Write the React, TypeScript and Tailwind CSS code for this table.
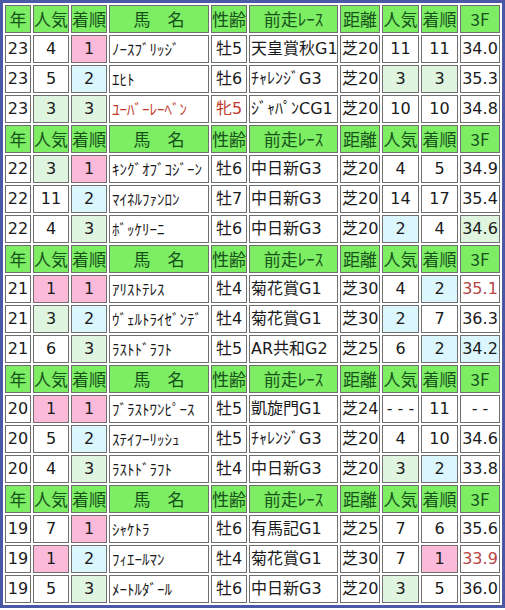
import React from "react";

type Tone = "pink" | "blue" | "green" | undefined;

type Row = {
  year: string;
  pop: [string, Tone];
  rank: [string, Tone];
  name: string;
  sex: string;
  red?: boolean;
  race: string;
  dist: string;
  prevPop: [string, Tone];
  prevRank: [string, Tone];
  last3f: [string, Tone];
  redF?: boolean;
};

const TONE: Record<string, string> = {
  pink: "bg-[#fbbad9]",
  blue: "bg-[#dcf6fd]",
  green: "bg-[#dff5df]",
};

const GROUPS: Row[][] = [
  [
    { year: "23", pop: ["4", undefined], rank: ["1", "pink"], name: "ﾉｰｽﾌﾞﾘｯｼﾞ", sex: "牡5", race: "天皇賞秋G1", dist: "芝20", prevPop: ["11", undefined], prevRank: ["11", undefined], last3f: ["34.0", undefined] },
    { year: "23", pop: ["5", undefined], rank: ["2", "blue"], name: "ｴﾋﾄ", sex: "牡6", race: "ﾁｬﾚﾝｼﾞG3", dist: "芝20", prevPop: ["3", "green"], prevRank: ["3", "green"], last3f: ["35.3", undefined] },
    { year: "23", pop: ["3", "green"], rank: ["3", "green"], name: "ﾕｰﾊﾞｰﾚｰﾍﾞﾝ", sex: "牝5", red: true, race: "ｼﾞｬﾊﾟﾝCG1", dist: "芝20", prevPop: ["10", undefined], prevRank: ["10", undefined], last3f: ["34.8", undefined] },
  ],
  [
    { year: "22", pop: ["3", "green"], rank: ["1", "pink"], name: "ｷﾝｸﾞｵﾌﾞｺｼﾞｰﾝ", sex: "牡6", race: "中日新G3", dist: "芝20", prevPop: ["4", undefined], prevRank: ["5", undefined], last3f: ["34.9", undefined] },
    { year: "22", pop: ["11", undefined], rank: ["2", "blue"], name: "ﾏｲﾈﾙﾌｧﾝﾛﾝ", sex: "牡7", race: "中日新G3", dist: "芝20", prevPop: ["14", undefined], prevRank: ["17", undefined], last3f: ["35.4", undefined] },
    { year: "22", pop: ["4", undefined], rank: ["3", "green"], name: "ﾎﾞｯｹﾘｰﾆ", sex: "牡6", race: "中日新G3", dist: "芝20", prevPop: ["2", "blue"], prevRank: ["4", undefined], last3f: ["34.6", "green"] },
  ],
  [
    { year: "21", pop: ["1", "pink"], rank: ["1", "pink"], name: "ｱﾘｽﾄﾃﾚｽ", sex: "牡4", race: "菊花賞G1", dist: "芝30", prevPop: ["4", undefined], prevRank: ["2", "blue"], last3f: ["35.1", undefined], redF: true },
    { year: "21", pop: ["3", "green"], rank: ["2", "blue"], name: "ｳﾞｪﾙﾄﾗｲｾﾞﾝﾃﾞ", sex: "牡4", race: "菊花賞G1", dist: "芝30", prevPop: ["2", "blue"], prevRank: ["7", undefined], last3f: ["36.3", undefined] },
    { year: "21", pop: ["6", undefined], rank: ["3", "green"], name: "ﾗｽﾄﾄﾞﾗﾌﾄ", sex: "牡5", race: "AR共和G2", dist: "芝25", prevPop: ["6", undefined], prevRank: ["2", "blue"], last3f: ["34.2", "blue"] },
  ],
  [
    { year: "20", pop: ["1", "pink"], rank: ["1", "pink"], name: "ﾌﾞﾗｽﾄﾜﾝﾋﾟｰｽ", sex: "牡5", race: "凱旋門G1", dist: "芝24", prevPop: ["- - -", undefined], prevRank: ["11", undefined], last3f: ["- -", undefined] },
    { year: "20", pop: ["5", undefined], rank: ["2", "blue"], name: "ｽﾃｲﾌｰﾘｯｼｭ", sex: "牡5", race: "ﾁｬﾚﾝｼﾞG3", dist: "芝20", prevPop: ["4", undefined], prevRank: ["10", undefined], last3f: ["34.6", undefined] },
    { year: "20", pop: ["4", undefined], rank: ["3", "green"], name: "ﾗｽﾄﾄﾞﾗﾌﾄ", sex: "牡4", race: "中日新G3", dist: "芝20", prevPop: ["3", "green"], prevRank: ["2", "blue"], last3f: ["33.8", undefined] },
  ],
  [
    { year: "19", pop: ["7", undefined], rank: ["1", "pink"], name: "ｼｬｹﾄﾗ", sex: "牡6", race: "有馬記G1", dist: "芝25", prevPop: ["7", undefined], prevRank: ["6", undefined], last3f: ["35.6", undefined] },
    { year: "19", pop: ["1", "pink"], rank: ["2", "blue"], name: "ﾌｨｴｰﾙﾏﾝ", sex: "牡4", race: "菊花賞G1", dist: "芝30", prevPop: ["7", undefined], prevRank: ["1", "pink"], last3f: ["33.9", undefined], redF: true },
    { year: "19", pop: ["5", undefined], rank: ["3", "green"], name: "ﾒｰﾄﾙﾀﾞｰﾙ", sex: "牡6", race: "中日新G3", dist: "芝20", prevPop: ["3", "green"], prevRank: ["5", undefined], last3f: ["36.0", undefined] },
  ],
];

const HEADS = ["年", "人気", "着順", "馬　名", "性齢", "前走ﾚｰｽ", "距離", "人気", "着順", "3F"];

function Cell({
  children,
  tone,
  align = "center",
  className = "",
}: {
  children: React.ReactNode;
  tone?: Tone;
  align?: "center" | "left";
  className?: string;
}) {
  return (
    <div
      className={`flex h-[28px] items-center overflow-hidden whitespace-nowrap border border-[#6f6f6f] ${
        align === "center" ? "justify-center" : "justify-start pl-[1px]"
      } ${tone ? TONE[tone] : "bg-white"} ${className}`}
    >
      {children}
    </div>
  );
}

export default function App() {
  return (
    <div className="h-[610px] w-[505px] bg-white">
      <div
        className="w-[505px] border-[3px] border-[#4a58a6] bg-white p-[2px] text-[16px] text-[#1a1a1a]"
        style={{ fontFamily: '"DejaVu Sans", "Noto Sans CJK JP", sans-serif' }}
      >
        <div className="grid grid-cols-[26px_36px_36px_100px_36px_89px_40px_37px_37px_40px] gap-[2px]">
          {GROUPS.map((group, gi) => (
            <React.Fragment key={gi}>
              {HEADS.map((h, hi) => (
                <div
                  key={`h${hi}`}
                  className="flex h-[28px] items-center justify-center whitespace-nowrap border border-[#6f6f6f] bg-[#7ded64] text-[17px] text-[#16521a]"
                  style={{ fontFamily: '"Noto Sans CJK JP", sans-serif' }}
                >
                  {h}
                </div>
              ))}
              {group.map((r, ri) => (
                <React.Fragment key={ri}>
                  <Cell>{r.year}</Cell>
                  <Cell tone={r.pop[1]}>{r.pop[0]}</Cell>
                  <Cell tone={r.rank[1]}>{r.rank[0]}</Cell>
                  <Cell align="left" className={`pl-[2px] text-[15px] ${r.red ? "text-[#c0392b]" : ""}`}>
                    <span style={{ fontFamily: '"Noto Sans CJK JP", sans-serif' }}>{r.name}</span>
                  </Cell>
                  <Cell className={r.red ? "text-[#c0392b]" : ""}>{r.sex}</Cell>
                  <Cell align="left">{r.race}</Cell>
                  <Cell align="left">{r.dist}</Cell>
                  <Cell tone={r.prevPop[1]}>{r.prevPop[0]}</Cell>
                  <Cell tone={r.prevRank[1]}>{r.prevRank[0]}</Cell>
                  <Cell tone={r.last3f[1]} className={r.redF ? "text-[#b84545]" : ""}>
                    {r.last3f[0]}
                  </Cell>
                </React.Fragment>
              ))}
            </React.Fragment>
          ))}
        </div>
      </div>
    </div>
  );
}
